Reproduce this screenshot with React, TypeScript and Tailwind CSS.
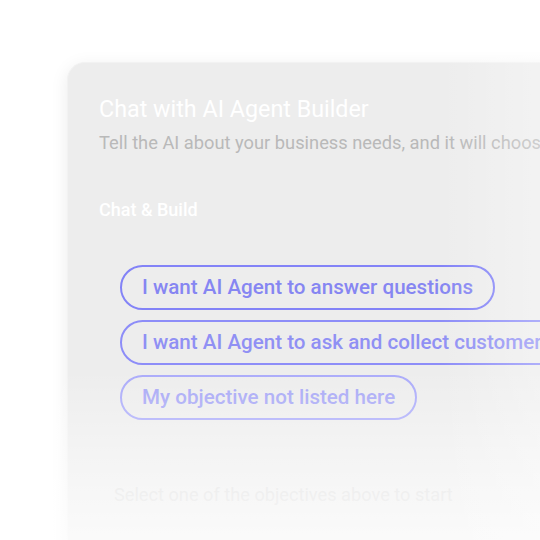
const chips = [
  { label: "I want AI Agent to answer questions", tone: "border-[#8383f7] text-[#8686f2]" },
  { label: "I want AI Agent to ask and collect customer information", tone: "border-[#8d8df8] text-[#9090f4]" },
  { label: "My objective not listed here", tone: "border-[#aaaafa] text-[#a8a8f6]" },
];

const App = () => {
  return (
    <div
      className="relative w-[540px] h-[540px] overflow-hidden bg-white"
      style={{ fontFamily: "Roboto, 'Liberation Sans', sans-serif" }}
    >
      <div className="pl-[67px] pt-[62px]">
        <div className="w-[640px] h-[520px] rounded-[18px] bg-[#ededed] shadow-[0_4px_18px_rgba(0,0,0,0.08)] border border-[#f2f2f2] pl-[31px] pt-[31px]">
          <h1 className="text-[23.3px] leading-[30px] text-white">Chat with AI Agent Builder</h1>
          <p className="mt-[6px] text-[18.3px] leading-[26px] text-[#b9b9b9] whitespace-nowrap">
            Tell the AI about your business needs, and it will choose
          </p>
          <h2 className="mt-[42px] text-[18px] leading-[24px] font-medium text-white">Chat &amp; Build</h2>
          <div className="mt-[43px] pl-[21px] flex flex-col items-start gap-[10px]">
            {chips.map((chip) => (
              <div
                key={chip.label}
                className={`h-[45px] flex items-center rounded-full border-2 px-[20px] text-[20.6px] font-medium whitespace-nowrap ${chip.tone}`}
              >
                {chip.label}
              </div>
            ))}
          </div>
          <p className="mt-[61px] pl-[15px] text-[18.2px] text-[#dcdcdc] whitespace-nowrap">
            Select one of the objectives above to start
          </p>
        </div>
      </div>
      {/* fade overlays */}
      <div className="absolute inset-x-0 bottom-0 h-[170px] bg-gradient-to-b from-transparent via-white/40 to-white/75" />
      <div className="absolute right-0 top-0 bottom-0 w-[100px] bg-gradient-to-r from-transparent to-white/30" />
    </div>
  );
};

export default App;
